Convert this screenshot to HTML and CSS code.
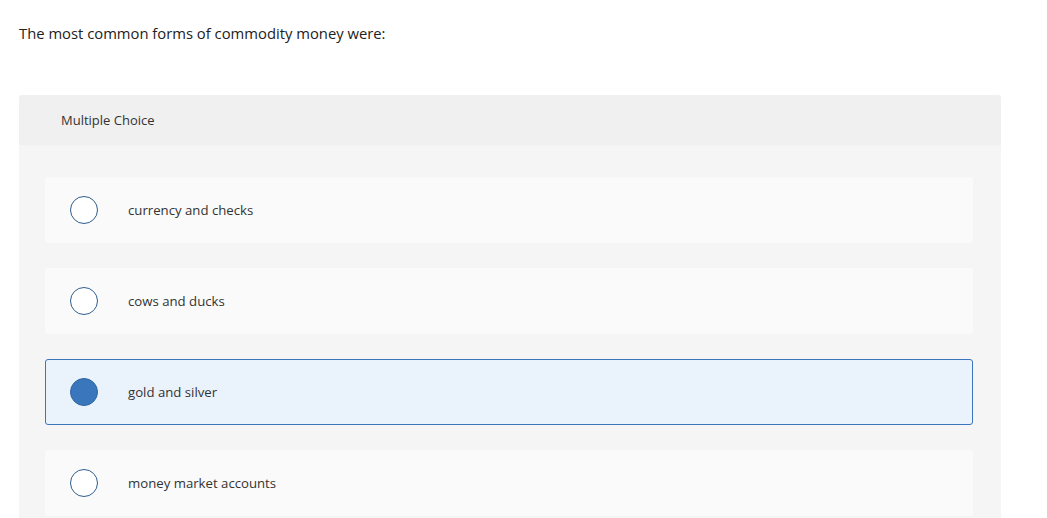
FILE: index.html
```html
<!DOCTYPE html>
<html lang="en">
<head>
    <meta charset="UTF-8">
    <meta name="viewport" content="width=device-width, initial-scale=1.0">
    <title>Multiple Choice</title>
    <link rel="stylesheet" href="styles.css">
</head>
<body>
    <div class="question">
        <p class="prompt">The most common forms of commodity money were:</p>

        <div class="choice-panel">
            <div class="panel-header">Multiple Choice</div>
            <div class="choices">
                <label class="choice">
                    <span class="radio"></span>
                    <span class="choice-text">currency and checks</span>
                </label>
                <label class="choice">
                    <span class="radio"></span>
                    <span class="choice-text">cows and ducks</span>
                </label>
                <label class="choice selected">
                    <span class="radio"></span>
                    <span class="choice-text">gold and silver</span>
                </label>
                <label class="choice">
                    <span class="radio"></span>
                    <span class="choice-text">money market accounts</span>
                </label>
            </div>
        </div>
    </div>
</body>
</html>
```

FILE: styles.css
```css
:root {
    --text: #222;
    --choice-text: #333;
    --header-bg: #f0f0f0;
    --panel-bg: #f5f5f5;
    --choice-bg: #fafafa;
    --selected-bg: #eaf2fb;
    --accent: #3a76bb;
    --radio-border: #2f5d8c;
}

* {
    margin: 0;
    padding: 0;
    box-sizing: border-box;
}

body {
    font-family: "Open Sans", Lato, Arial, sans-serif;
    background: #fff;
    color: var(--text);
    overflow: hidden;
}

.question {
    width: 982px;
    margin-left: 19px;
    padding-top: 23px;
}

.prompt {
    font-size: 14.8px;
    line-height: 20px;
    margin-bottom: 52px;
}

.choice-panel {
    background: var(--panel-bg);
    border-radius: 3px 3px 0 0;
}

.panel-header {
    height: 50px;
    display: flex;
    align-items: center;
    padding-left: 42px;
    background: var(--header-bg);
    border-radius: 3px 3px 0 0;
    font-size: 13px;
    color: var(--choice-text);
}

.choices {
    display: flex;
    flex-direction: column;
    gap: 25px;
    padding: 32px 28px 10px 26px;
}

.choice {
    display: flex;
    align-items: center;
    height: 66px;
    padding-left: 24px;
    background: var(--choice-bg);
    border: 1px solid transparent;
    border-radius: 3px;
    cursor: pointer;
}

.choice.selected {
    background: var(--selected-bg);
    border-color: var(--accent);
}

.radio {
    width: 28px;
    height: 28px;
    flex: 0 0 auto;
    border: 1.5px solid var(--radio-border);
    border-radius: 50%;
    background: #fff;
}

.choice.selected .radio {
    background: var(--accent);
    border-color: #2f65a3;
}

.choice-text {
    margin-left: 30px;
    font-size: 13.2px;
    color: var(--choice-text);
}
```
